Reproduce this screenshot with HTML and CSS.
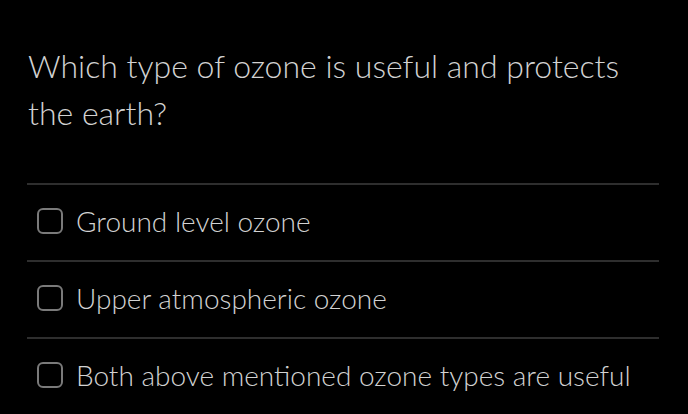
FILE: index.html
```html
<!DOCTYPE html>
<html lang="en">
<head>
    <meta charset="UTF-8">
    <meta name="viewport" content="width=device-width, initial-scale=1.0">
    <title>Ozone Quiz</title>
    <link rel="stylesheet" href="styles.css">
</head>
<body>
    <div class="quiz">
        <h2 class="question">Which type of ozone is useful and protects the earth?</h2>

        <ul class="options">
            <li class="option">
                <span class="check"></span>
                Ground level ozone
            </li>
            <li class="option">
                <span class="check"></span>
                Upper atmospheric ozone
            </li>
            <li class="option">
                <span class="check"></span>
                Both above mentioned ozone types are useful
            </li>
        </ul>
    </div>
</body>
</html>
```

FILE: styles.css
```css
body {
    margin: 0;
    background: #000;
    color: #d2d2d2;
    font-family: 'Lato', 'Open Sans', sans-serif;
    font-weight: 300;
}

.quiz {
    padding: 42px 29px 0 27px;
}

.question {
    margin: 0 0 47px 1px;
    font-size: 32px;
    font-weight: 300;
    line-height: 47px;
    max-width: 610px;
}

.options {
    list-style: none;
    margin: 0;
    padding: 0;
}

.option {
    display: flex;
    align-items: center;
    gap: 13px;
    height: 72px;
    padding: 0 0 3px 10px;
    border-top: 2px solid #2e2e2e;
    font-size: 28px;
}

.check {
    width: 22px;
    height: 22px;
    border: 2.5px solid #7a7a7a;
    border-radius: 6px;
    flex-shrink: 0;
}
```
